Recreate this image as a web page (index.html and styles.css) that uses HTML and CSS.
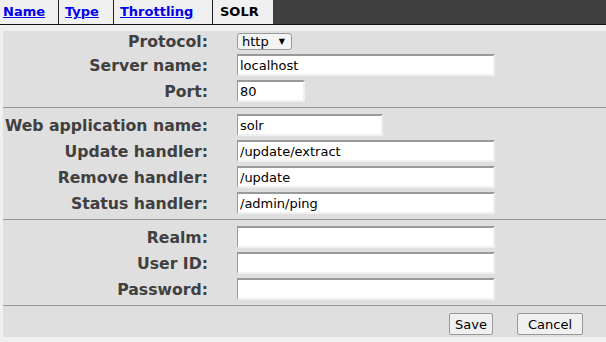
FILE: index.html
```html
<!DOCTYPE html>
<html lang="en">
<head>
  <meta charset="UTF-8">
  <title>SOLR output connection</title>
<link rel="stylesheet" href="styles.css">
</head>
<body>
  <div class="tabbar">
    <div class="tab"><a href="#">Name</a></div>
    <div class="tab tab-type"><a href="#">Type</a></div>
    <div class="tab tab-throttle"><a href="#">Throttling</a></div>
    <div class="tab tab-current">SOLR</div>
  </div>

  <form class="panel">
    <div class="section first">
      <label>Protocol:</label>
      <div class="select-wrap">
        <select class="proto">
          <option>http</option>
          <option>https</option>
        </select>
        <span class="arrow">&#9660;</span>
      </div>
      <label>Server name:</label>
      <input type="text" class="wide" value="localhost">
      <label>Port:</label>
      <input type="text" class="short" value="80">
    </div>

    <div class="section">
      <label>Web application name:</label>
      <input type="text" class="medium" value="solr">
      <label>Update handler:</label>
      <input type="text" class="wide" value="/update/extract">
      <label>Remove handler:</label>
      <input type="text" class="wide" value="/update">
      <label>Status handler:</label>
      <input type="text" class="wide" value="/admin/ping">
    </div>

    <div class="section">
      <label>Realm:</label>
      <input type="text" class="wide" value="">
      <label>User ID:</label>
      <input type="text" class="wide" value="">
      <label>Password:</label>
      <input type="password" class="wide" value="">
    </div>

    <div class="buttons">
      <button type="button" class="save">Save</button>
      <button type="button" class="cancel">Cancel</button>
    </div>
  </form>
</body>
</html>
```

FILE: styles.css
```css
body {
  margin: 0;
  background-color: #f0f0f0;
  font-family: 'DejaVu Sans', sans-serif;
  font-size: 13px;
}

/* tab strip along the top */
.tabbar {
  display: flex;
  height: 24px;
  background-color: #404040;
  border-bottom: 1px solid #111;
}

.tab {
  width: 59px;
  box-sizing: border-box;
  padding-left: 3px;
  background-color: #f0f0f0;
  border-right: 1px solid #222;
  font-weight: bold;
  font-size: 13px;
  line-height: 24px;
}

.tab-type {
  width: 55px;
  padding-left: 6px;
}

.tab-throttle {
  width: 99px;
  padding-left: 6px;
}

.tab-current {
  width: 60px;
  padding-left: 7px;
  color: #000;
  border-right: none;
}

.tab a {
  color: #0000ee;
}

/* form panel */
.panel {
  margin: 6px 0 0 3px;
  background-color: #dfdfdf;
}

.section {
  display: grid;
  grid-template-columns: 205px auto;
  column-gap: 29px;
  row-gap: 4px;
  align-items: center;
  justify-items: start;
  padding: 6px 0 5px 0;
  border-bottom: 1px solid #999;
}

.section.first {
  padding-top: 2px;
}

.section label {
  justify-self: end;
  color: #404040;
  font-weight: bold;
  font-size: 15.7px;
  line-height: 17px;
}

input[type="text"],
input[type="password"] {
  box-sizing: border-box;
  height: 22px;
  margin: 0;
  padding: 1px 2px 0 2px;
  font-family: 'DejaVu Sans', sans-serif;
  font-size: 13px;
  color: #000;
  background-color: #fff;
  border-style: solid;
  border-width: 2px 2px 2px 1px;
  border-color: #999 #f0f0f0 #f0f0f0 #999;
}

.wide {
  width: 258px;
}

.medium {
  width: 146px;
}

.short {
  width: 68px;
}

.select-wrap {
  position: relative;
  width: 55px;
  height: 17px;
}

.proto {
  appearance: none;
  -webkit-appearance: none;
  box-sizing: border-box;
  width: 55px;
  height: 17px;
  margin: 0;
  padding: 0 0 0 4px;
  font-family: 'DejaVu Sans', sans-serif;
  font-size: 13px;
  line-height: 15px;
  color: #000;
  background-color: #f4f4f4;
  border: 1px solid #999;
  border-radius: 3px;
}

.arrow {
  position: absolute;
  right: 7px;
  top: 4px;
  font-size: 8px;
  line-height: 9px;
  color: #000;
  pointer-events: none;
}

.buttons {
  display: flex;
  justify-content: flex-end;
  gap: 24px;
  padding: 7px 23px 2px 0;
}

button {
  box-sizing: border-box;
  height: 22px;
  padding: 0;
  font-family: 'DejaVu Sans', sans-serif;
  font-size: 13px;
  color: #000;
  background-color: #f0f0f0;
  border: 1px solid #999;
  border-radius: 2px;
}

.save {
  width: 44px;
}

.cancel {
  width: 66px;
}
```
